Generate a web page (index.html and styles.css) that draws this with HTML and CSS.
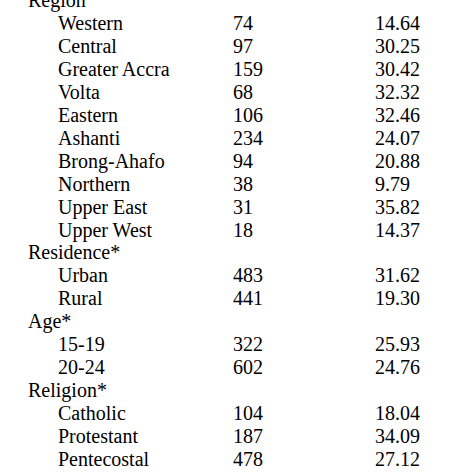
FILE: index.html
```html
<!DOCTYPE html>
<html>
<head>
<meta charset="utf-8">
<link rel="stylesheet" href="styles.css">
</head>
<body>
<div class="table">
  <div class="row"><span class="label group">Region</span><span class="num"></span><span class="pct"></span></div>
  <div class="row"><span class="label sub">Western</span><span class="num">74</span><span class="pct">14.64</span></div>
  <div class="row"><span class="label sub">Central</span><span class="num">97</span><span class="pct">30.25</span></div>
  <div class="row"><span class="label sub">Greater Accra</span><span class="num">159</span><span class="pct">30.42</span></div>
  <div class="row"><span class="label sub">Volta</span><span class="num">68</span><span class="pct">32.32</span></div>
  <div class="row"><span class="label sub">Eastern</span><span class="num">106</span><span class="pct">32.46</span></div>
  <div class="row"><span class="label sub">Ashanti</span><span class="num">234</span><span class="pct">24.07</span></div>
  <div class="row"><span class="label sub">Brong-Ahafo</span><span class="num">94</span><span class="pct">20.88</span></div>
  <div class="row"><span class="label sub">Northern</span><span class="num">38</span><span class="pct">9.79</span></div>
  <div class="row"><span class="label sub">Upper East</span><span class="num">31</span><span class="pct">35.82</span></div>
  <div class="row"><span class="label sub">Upper West</span><span class="num">18</span><span class="pct">14.37</span></div>
  <div class="row"><span class="label group">Residence*</span><span class="num"></span><span class="pct"></span></div>
  <div class="row"><span class="label sub">Urban</span><span class="num">483</span><span class="pct">31.62</span></div>
  <div class="row"><span class="label sub">Rural</span><span class="num">441</span><span class="pct">19.30</span></div>
  <div class="row"><span class="label group">Age*</span><span class="num"></span><span class="pct"></span></div>
  <div class="row"><span class="label sub">15-19</span><span class="num">322</span><span class="pct">25.93</span></div>
  <div class="row"><span class="label sub">20-24</span><span class="num">602</span><span class="pct">24.76</span></div>
  <div class="row"><span class="label group">Religion*</span><span class="num"></span><span class="pct"></span></div>
  <div class="row"><span class="label sub">Catholic</span><span class="num">104</span><span class="pct">18.04</span></div>
  <div class="row"><span class="label sub">Protestant</span><span class="num">187</span><span class="pct">34.09</span></div>
  <div class="row"><span class="label sub">Pentecostal</span><span class="num">478</span><span class="pct">27.12</span></div>
</div>
</body>
</html>
```
FILE: styles.css
```css
html, body {
  margin: 0;
  padding: 0;
  background: #fff;
  overflow: hidden;
}
.table {
  margin-top: -11px;
  padding-left: 28px;
  font-family: "Liberation Serif", "Times New Roman", serif;
  font-size: 20px;
  line-height: 22.95px;
  color: #000;
}
.row {
  display: grid;
  grid-template-columns: 205px 142px auto;
  white-space: nowrap;
}
.label.sub {
  padding-left: 30px;
}
```
